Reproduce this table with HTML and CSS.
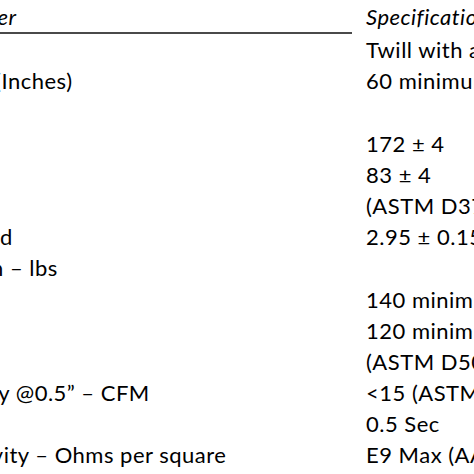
FILE: index.html
```html
<!DOCTYPE html>
<html>
<head>
<meta charset="utf-8">
<link rel="stylesheet" href="styles.css">
</head>
<body>
<div class="sheet">
  <div class="spec-table">
    <div class="cell head param">Technical Parameter</div>
    <div class="cell head spec">Specification</div>

    <div class="cell param">Weave</div>
    <div class="cell spec">Twill with a dull finish</div>

    <div class="cell param">Cloth Cut Width (Inches)</div>
    <div class="cell spec">60 minimum</div>

    <div class="cell param">Thread Count</div>
    <div class="cell spec"></div>

    <div class="cell param sub">Warp</div>
    <div class="cell spec">172 ± 4</div>

    <div class="cell param sub">Fill</div>
    <div class="cell spec">83 ± 4</div>

    <div class="cell param"></div>
    <div class="cell spec">(ASTM D3775)</div>

    <div class="cell param">Weight, oz/sq yard</div>
    <div class="cell spec">2.95 ± 0.15</div>

    <div class="cell param">Breaking Strength – lbs</div>
    <div class="cell spec"></div>

    <div class="cell param sub">Warp</div>
    <div class="cell spec">140 minimum</div>

    <div class="cell param sub">Fill</div>
    <div class="cell spec">120 minimum</div>

    <div class="cell param"></div>
    <div class="cell spec">(ASTM D5034)</div>

    <div class="cell param">Cloth Permeability @0.5” – CFM</div>
    <div class="cell spec">&lt;15 (ASTM D737)</div>

    <div class="cell param">Static Decay</div>
    <div class="cell spec">0.5 Sec</div>

    <div class="cell param">Antistatic Resistivity – Ohms per square</div>
    <div class="cell spec">E9 Max (AATCC 76)</div>
  </div>
</div>
</body>
</html>
```

FILE: styles.css
```css
html, body {
  margin: 0;
  padding: 0;
  background: #ffffff;
}
body {
  width: 474px;
  height: 474px;
  overflow: hidden;
}
.sheet {
  width: 474px;
  height: 474px;
  overflow: hidden;
}
.spec-table {
  display: grid;
  grid-template-columns: 533px 400px;
  margin-left: -181px;
  font-family: Lato, "Open Sans", sans-serif;
  font-size: 22px;
  letter-spacing: 0.5px;
  color: #000000;
  white-space: nowrap;
}
.cell {
  line-height: 31.2px;
  height: 31.2px;
}
.head {
  font-style: italic;
  line-height: 30px;
  height: 30px;
  margin-top: 2px;
}
.head.param {
  border-bottom: 2px solid #4a4a4a;
}
.head.spec {
  border-bottom: 2px solid transparent;
}
.spec {
  padding-left: 14px;
}
.param {
  padding-left: 4px;
}
.param.sub {
  padding-left: 24px;
}
```
